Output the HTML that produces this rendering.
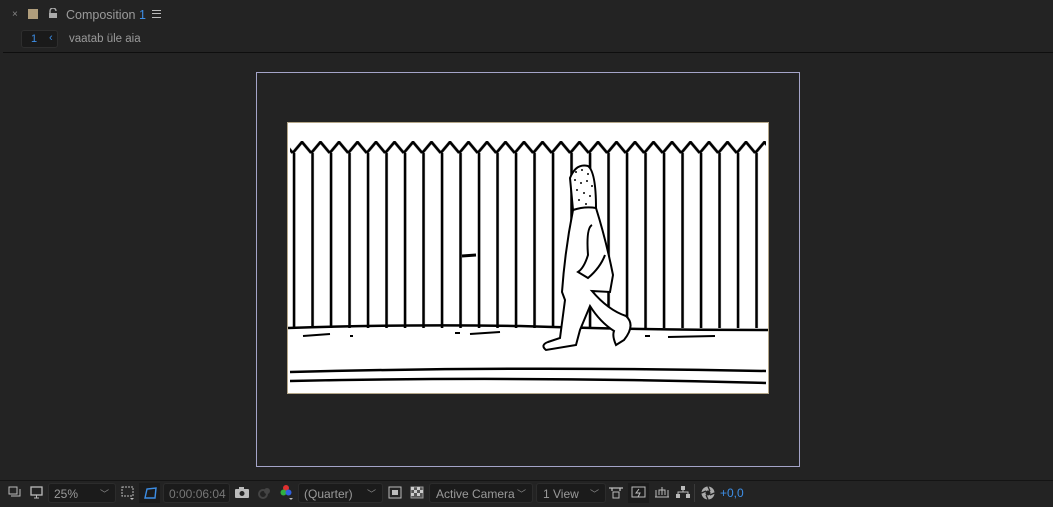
<!DOCTYPE html>
<html><head><meta charset="utf-8"><style>
body{margin:0;width:1053px;height:507px;background:#232323;overflow:hidden;font-family:"Liberation Sans",sans-serif;position:relative}
.a{position:absolute}
.t{color:#9a9a9a;font-size:12px}
.box{position:absolute;background:#1b1b1b;border:1px solid #2c2c2c;border-radius:3px;color:#9a9a9a;font-size:12px;line-height:20px;box-sizing:border-box;padding-left:5px}
.chev{position:absolute;right:6px;top:0;color:#8a8a8a;font-size:9px}
</style></head><body>
<div class="a" style="left:12px;top:9px;color:#888;font-size:10px">×</div>
<div class="a" style="left:28px;top:9px;width:10px;height:10px;background:#b09e7c"></div>
<svg class="a" style="left:48px;top:8px" width="10" height="11"><path d="M2 5V3a3 3 0 0 1 6 0" stroke="#aaa" fill="none" stroke-width="1.4"/><rect x="1" y="5" width="8" height="5" fill="#aaa"/></svg>
<div class="a t" style="left:66px;top:8px;font-size:12.5px">Composition <span style="color:#3d8ee6">1</span></div>
<div class="a" style="left:152px;top:10px;width:9px;height:8px;border-top:1.5px solid #bbb;border-bottom:1.5px solid #bbb;box-sizing:border-box"><div style="margin-top:1.5px;height:1.5px;background:#bbb"></div></div>
<div class="a" style="left:21px;top:30px;width:37px;height:18px;background:#1a1a1a;border:1px solid #2e2e2e;border-radius:3px;box-sizing:border-box"><span class="a" style="left:9px;top:2px;color:#3d8ee6;font-size:11px">1</span><span class="a" style="left:27px;top:1px;color:#3d8ee6;font-size:11px">‹</span></div>
<div class="a t" style="left:69px;top:33px;font-size:11.5px">vaatab üle aia</div>
<div class="a" style="left:3px;top:52px;width:1050px;height:1px;background:#0e0e0e"></div>
<div class="a" style="left:256px;top:72px;width:544px;height:395px;border:1px solid #a4a4c8;box-sizing:border-box"></div>
<div class="a" style="left:287px;top:122px;width:482px;height:272px;background:#b4a688"></div>
<svg class="a" style="left:288px;top:123px" width="480" height="270" viewBox="288 123 480 270">
<defs><pattern id="p" x="292.75" y="141" width="18.5" height="200" patternUnits="userSpaceOnUse"><path d="M0 12 L9.25 1 L18.5 12 M1.2 12 V190" stroke="#000" stroke-width="2.8" fill="none"/></pattern></defs>
<rect x="288" y="123" width="480" height="270" fill="#fff"/>
<rect x="290" y="141" width="476" height="187" fill="url(#p)"/>
<path d="M288 328 Q400 324 520 326 Q640 330 768 330" stroke="#000" stroke-width="2.5" fill="none"/>
<path d="M303 336 L330 334 M350 336 L353 336 M455 333 L460 333 M470 334 L500 332 M645 336 L650 336 M668 337 L715 336" stroke="#000" stroke-width="2" fill="none"/>
<path d="M290 372 Q520 366 766 371 M290 381 Q520 376 766 383" stroke="#000" stroke-width="2.5" fill="none"/>
<path d="M462 256 L476 255" stroke="#000" stroke-width="3"/>
<path d="M573 210 L570 178 Q576 163 588 166 Q596 172 596 208 Q606 240 613 275 L610 292 L592 291 Q608 310 626 316 Q636 325 624 340 L616 345 Q612 336 614 331 Q600 322 590 306 L580 330 L576 345 L546 350 Q540 345 548 342 L560 338 L565 300 L562 292 Q565 250 573 210 Z" fill="#fff" stroke="#000" stroke-width="2"/>
<path d="M573 210 Q585 206 596 208 M592 225 Q586 228 588 255 Q584 268 578 272 L588 278 Q600 268 605 255" stroke="#000" stroke-width="2" fill="none"/>
<path d="M575 172h2M581 170h2M587 174h2M574 180h2M580 183h2M586 181h2M591 186h2M576 190h2M583 193h2M589 196h2M578 200h2M585 204h2" stroke="#000" stroke-width="1.6"/>
</svg>
<div class="a" style="left:0;top:480px;width:1053px;height:1px;background:#141414"></div>
<svg class="a" style="left:8px;top:486px" width="14" height="13"><rect x="1" y="1" width="8" height="7" fill="none" stroke="#bbb"/><path d="M3 10h9V3" stroke="#bbb" fill="none"/></svg>
<svg class="a" style="left:30px;top:486px" width="13" height="13"><rect x="1" y="1" width="11" height="8" fill="none" stroke="#bbb" stroke-width="1.3"/><path d="M4 12h5M6.5 9v3" stroke="#bbb"/></svg>
<div class="box" style="left:48px;top:483px;width:68px;height:20px">25%<span class="chev">﹀</span></div>
<svg class="a" style="left:120px;top:485px" width="16" height="16"><rect x="2" y="2" width="11" height="9" fill="none" stroke="#bbb" stroke-dasharray="2 1"/><path d="M10 13l2 2 2-2z" fill="#bbb"/></svg>
<div class="a" style="left:139px;top:483px;width:21px;height:20px;background:#1b1b1b"></div>
<svg class="a" style="left:142px;top:485px" width="16" height="16"><path d="M3 13 L5 4 L14 3 L13 13 Z" stroke="#3d8ee6" fill="none" stroke-width="1.4"/></svg>
<div class="box" style="left:163px;top:483px;width:67px;height:20px;color:#777">0:00:06:04</div>
<svg class="a" style="left:234px;top:486px" width="16" height="13"><rect x="1" y="3" width="14" height="9" rx="1" fill="#bbb"/><rect x="5" y="1" width="5" height="3" fill="#bbb"/><circle cx="8" cy="7.5" r="2.5" fill="#232323"/></svg>
<svg class="a" style="left:257px;top:486px" width="16" height="13"><circle cx="6" cy="8" r="4" fill="none" stroke="#444" stroke-width="2"/><circle cx="10" cy="5" r="3" fill="#444"/></svg>
<svg class="a" style="left:279px;top:484px" width="16" height="18"><circle cx="7" cy="4" r="3" fill="#e03030"/><circle cx="4.5" cy="8.5" r="3" fill="#30b040"/><circle cx="9.5" cy="8.5" r="3" fill="#3060e0"/><path d="M10 14l2 2 2-2z" fill="#bbb"/></svg>
<div class="box" style="left:298px;top:483px;width:85px;height:20px">(Quarter)<span class="chev">﹀</span></div>
<svg class="a" style="left:388px;top:486px" width="14" height="13"><rect x="1" y="1" width="12" height="11" fill="none" stroke="#bbb"/><rect x="4" y="4" width="6" height="5" fill="#bbb"/></svg>
<svg class="a" style="left:410px;top:486px" width="14" height="13"><rect x="1" y="1" width="12" height="11" fill="#555" stroke="#999"/><path d="M1 1h3v3H1zM7 1h3v3H7zM4 4h3v3H4zM10 4h3v3h-3zM1 7h3v3H1zM7 7h3v3H7z" fill="#ccc"/></svg>
<div class="box" style="left:429px;top:483px;width:104px;height:20px;padding-left:6px">Active Camera<span class="chev">﹀</span></div>
<div class="box" style="left:536px;top:483px;width:70px;height:20px;padding-left:6px">1 View<span class="chev">﹀</span></div>
<svg class="a" style="left:608px;top:485px" width="16" height="16"><path d="M1 3h14M4 3V6M12 3V6" stroke="#bbb" stroke-width="1.3"/><rect x="5" y="7" width="6" height="6" fill="none" stroke="#bbb"/></svg>
<div class="a" style="left:628px;top:483px;width:21px;height:20px;background:#1b1b1b"></div>
<svg class="a" style="left:631px;top:485px" width="16" height="16"><rect x="1" y="2" width="13" height="10" fill="none" stroke="#bbb"/><path d="M8 4L5 8h4l-2 4" stroke="#bbb" fill="none"/></svg>
<svg class="a" style="left:654px;top:486px" width="16" height="13"><path d="M1 11h14M2 11V4M14 11V4M5 9V4h6v5M8 1v8" stroke="#bbb" fill="none"/></svg>
<svg class="a" style="left:675px;top:485px" width="16" height="15"><rect x="6" y="1" width="4" height="4" fill="#bbb"/><rect x="1" y="9" width="4" height="4" fill="#bbb"/><rect x="11" y="9" width="4" height="4" fill="#bbb"/><path d="M8 5v2M3 9V7h10v2" stroke="#bbb" fill="none"/></svg>
<div class="a" style="left:694px;top:484px;width:1px;height:18px;background:#3a3a3a"></div>
<svg class="a" style="left:700px;top:485px" width="16" height="16"><circle cx="8" cy="8" r="6.5" fill="#aaa"/><circle cx="8" cy="8" r="2.5" fill="#232323"/><path d="M8 1.5L10 6M14.5 8L10 10M8 14.5L6 10M1.5 8L6 6" stroke="#232323" stroke-width="1.3"/></svg>
<div class="a" style="left:720px;top:486px;color:#3d8ee6;font-size:12px">+0,0</div>
</body></html>
